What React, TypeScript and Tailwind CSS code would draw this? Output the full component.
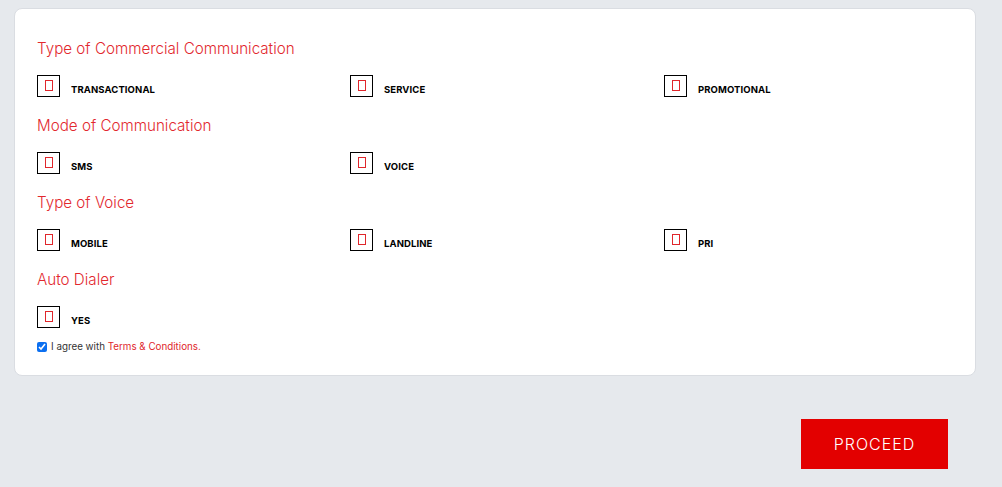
import React, { useState } from 'react';

const sections = [
  { title: 'Type of Commercial Communication', options: ['TRANSACTIONAL', 'SERVICE', 'PROMOTIONAL'] },
  { title: 'Mode of Communication', options: ['SMS', 'VOICE'] },
  { title: 'Type of Voice', options: ['MOBILE', 'LANDLINE', 'PRI'] },
  { title: 'Auto Dialer', options: ['YES'] },
];

const OptionBox: React.FC<{ label: string }> = ({ label }) => (
  <label className="flex items-start gap-[11px] cursor-pointer">
    <span className="flex h-[22px] w-[23px] justify-center border border-black pt-[4px]">
      <span className="h-[11px] w-[8px] border border-[#e0262b]" />
    </span>
    <span className="mt-[9px] text-[9.5px] font-bold leading-[12px] tracking-[0.1px] text-black">{label}</span>
  </label>
);

export default function App() {
  const [agree, setAgree] = useState(true);

  return (
    <div className="min-h-screen bg-[#e6e9ed] px-[14px] pt-[8px] font-['Inter','Liberation_Sans',sans-serif]">
      <div className="w-[962px] rounded-[8px] border border-[#dadde2] bg-white px-[22px] pt-[30px] pb-[23px]">
        {sections.map((section, i) => (
          <div key={section.title} className={i < sections.length - 1 ? 'mb-[19px]' : 'mb-[13px]'}>
            <h3 className="mb-[16px] text-[15.2px] font-light leading-[20px] text-[#e2282e]">{section.title}</h3>
            <div className="grid w-[940px] grid-cols-[313px_314px_1fr]">
              {section.options.map((opt) => (
                <OptionBox key={opt} label={opt} />
              ))}
            </div>
          </div>
        ))}
        <div className="flex items-center gap-[4px] text-[9.8px] leading-[11px] text-[#333]">
          <input
            type="checkbox"
            checked={agree}
            onChange={(e) => setAgree(e.target.checked)}
            className="m-0 h-[10px] w-[10px] accent-[#0b6ff0]"
          />
          <span>
            I agree with <a href="#" className="text-[#e0262b]">Terms &amp; Conditions.</a>
          </span>
        </div>
      </div>
      <div className="flex justify-end pr-[40px] pt-[43px]">
        <button className="h-[50px] w-[147px] bg-[#e30000] text-[16px] font-light tracking-[1px] text-white">PROCEED</button>
      </div>
    </div>
  );
}
